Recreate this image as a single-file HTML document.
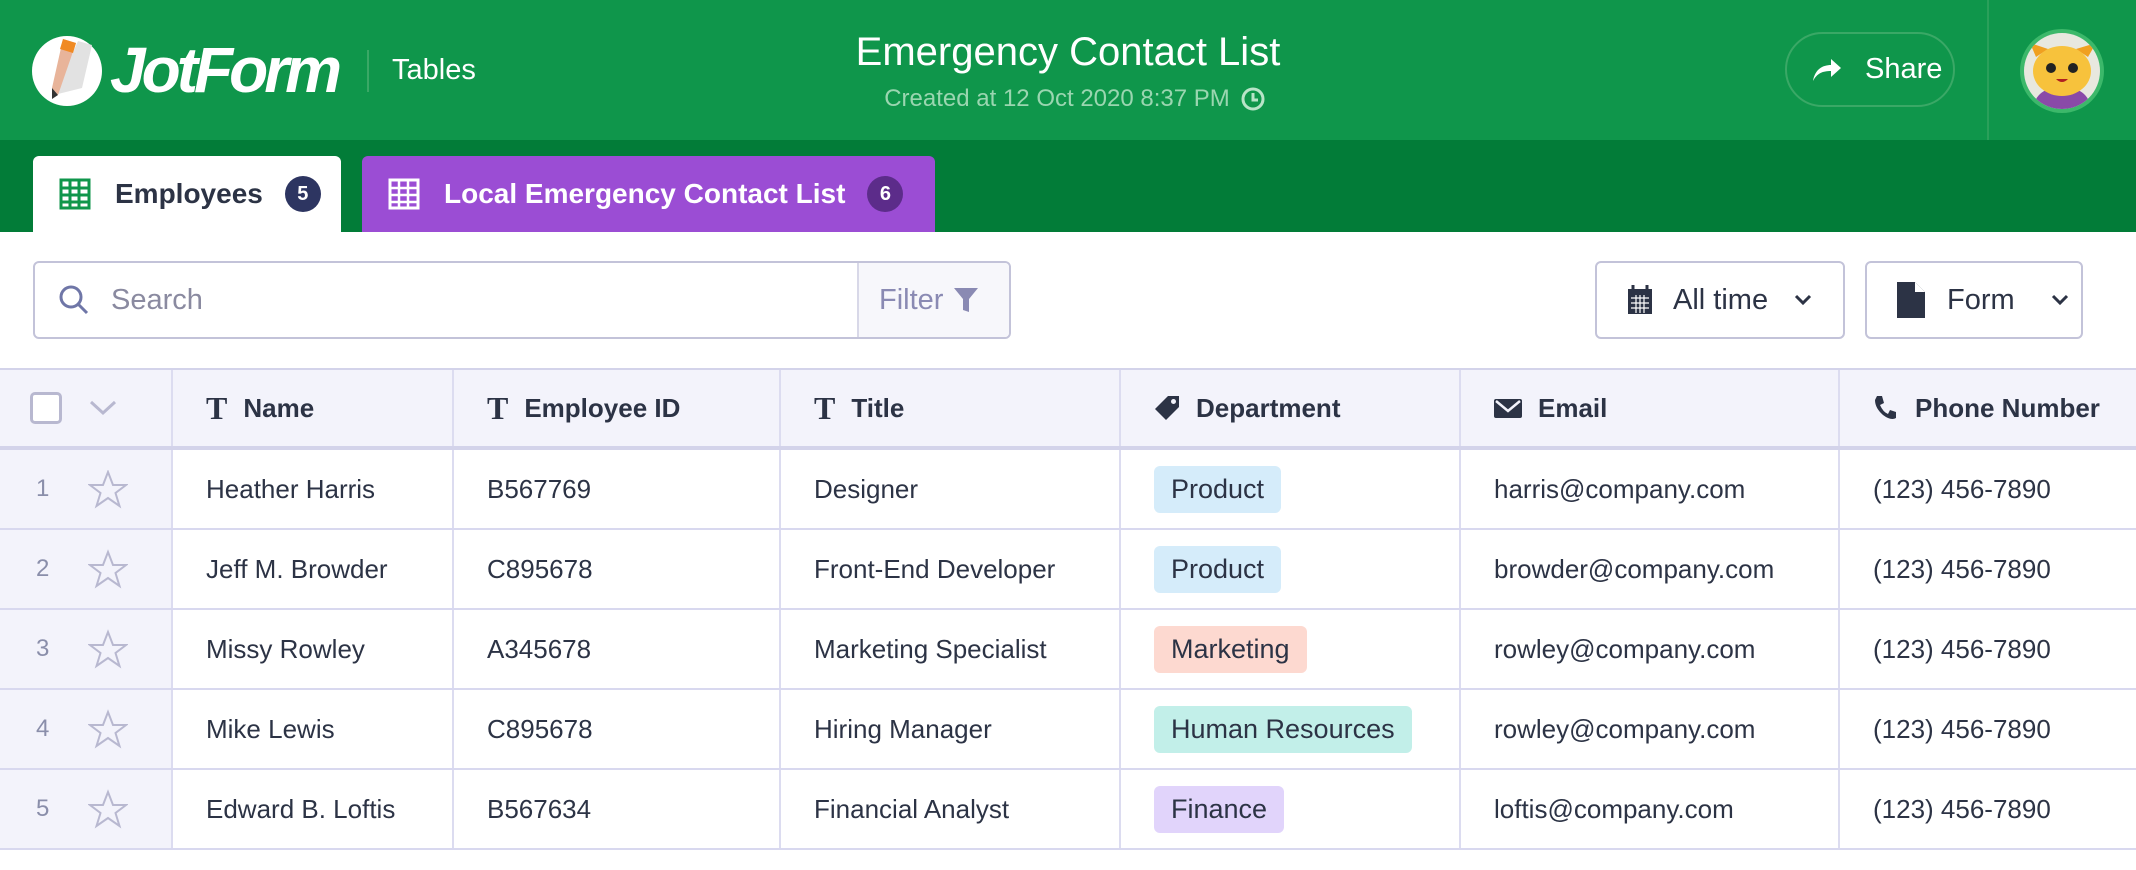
<!DOCTYPE html>
<html><head><meta charset="utf-8"><style>
*{box-sizing:border-box;margin:0;padding:0}
body{width:2136px;height:852px;overflow:hidden;background:#fff;font-family:"Liberation Sans",sans-serif;color:#2c3345;position:relative}
.abs{position:absolute}
.hdr{left:0;top:0;width:2136px;height:140px;background:#0f964b}
.tabbar{left:0;top:140px;width:2136px;height:92px;background:#027c38}
.tab{top:156px;height:76px;border-radius:6px 6px 0 0;display:flex;align-items:center;font-size:28px;font-weight:bold}
.badge{width:36px;height:36px;border-radius:18px;display:flex;align-items:center;justify-content:center;font-size:20px;color:#fff;margin-left:22px}
.btn{border:2px solid #c3c3d9;border-radius:6px;background:#fff;display:flex;align-items:center;font-size:29px}
.tbl{left:0;top:368px;width:2136px}
.row{position:absolute;left:0;width:2136px;height:80px;border-bottom:2px solid #d8d8ef}
.cell{position:absolute;top:0;height:100%;display:flex;align-items:center;font-size:26px;border-right:2px solid #dcdcf0;padding-left:33px;color:#2c3345}
.hd .cell{font-weight:bold}
.tag{padding:8px 17px;border-radius:6px;font-size:27px}
.num{color:#8a8eaa;font-size:24px}
</style></head><body>
<div class="abs hdr"></div>
<svg class="abs" style="left:30px;top:33px" width="76" height="76" viewBox="0 0 76 76">
<circle cx="37" cy="38" r="35" fill="#fff"/>
<path d="M48 8 L62 12 L52 55 L24 62 Z" fill="#e2e2e2"/>
<path d="M33 6 L46 10 L28 62 L22 55 Z" fill="#e8b49a"/>
<path d="M33 6 L46 10 L43 20 L30 16 Z" fill="#f08a24"/>
<path d="M22 55 L28 62 L22 66 Z" fill="#333"/>
</svg>
<div class="abs" style="left:110px;top:33px;font-size:64px;font-weight:bold;font-style:italic;color:#fff;letter-spacing:-4px">JotForm</div>
<div class="abs" style="left:367px;top:50px;width:2px;height:42px;background:#3aa866"></div>
<div class="abs" style="left:392px;top:54px;font-size:29px;color:#fff">Tables</div>
<div class="abs" style="left:0;width:2136px;top:30px;text-align:center;font-size:40px;color:#fff">Emergency Contact List</div>
<div class="abs" style="left:0;width:2136px;top:85px;display:flex;justify-content:center;align-items:center;font-size:24px;color:#9ad6b0;padding-left:14px">Created at 12 Oct 2020 8:37 PM
<svg width="26" height="26" viewBox="0 0 26 26" style="margin-left:10px"><circle cx="13" cy="13" r="10" fill="none" stroke="#b8e4c8" stroke-width="3"/><path d="M13 7v7h5" fill="none" stroke="#b8e4c8" stroke-width="3"/></svg></div>
<div class="abs" style="left:1785px;top:32px;width:170px;height:75px;border:2px solid #3aa866;border-radius:38px;display:flex;align-items:center;padding-left:22px;color:#fff;font-size:29px">
<svg width="34" height="26" viewBox="0 0 34 26" style="margin-right:22px"><path d="M4 24 C6 12 14 8 22 8 V2 L32 11 L22 20 V14 C14 14 8 16 4 24Z" fill="#fff"/></svg>Share</div>
<div class="abs" style="left:1987px;top:0;width:2px;height:140px;background:#2aa05a"></div>
<svg class="abs" style="left:2018px;top:27px" width="88" height="88" viewBox="0 0 88 88">
<circle cx="44" cy="44" r="42" fill="#3cb86a"/><circle cx="44" cy="44" r="38" fill="#e8e8df"/>
<clipPath id="c"><circle cx="44" cy="44" r="38"/></clipPath>
<g clip-path="url(#c)"><path d="M14 90 Q14 60 44 60 Q74 60 74 90Z" fill="#8a4aa8"/>
<path d="M18 30 L12 16 L30 22Z M70 30 L78 16 L58 22Z" fill="#f0a020"/>
<ellipse cx="44" cy="44" rx="29" ry="25" fill="#f7c23c"/>
<circle cx="33" cy="41" r="5" fill="#222"/><circle cx="55" cy="41" r="5" fill="#222"/>
<path d="M38 52 Q44 58 50 52Z" fill="#b02020"/></g></svg>

<div class="abs tabbar"></div>
<div class="abs tab" style="left:33px;width:308px;background:#fff;padding-left:26px;color:#2c3345">
<svg width="32" height="32" viewBox="0 0 32 32" style="margin-right:24px"><rect x="2" y="2" width="28" height="28" fill="none" stroke="#0f964b" stroke-width="3"/><path d="M2 10H30M2 17H30M2 24H30M11 2V30M20 2V30" stroke="#0f964b" stroke-width="3"/></svg>Employees<div class="badge" style="background:#2d3561">5</div></div>
<div class="abs tab" style="left:362px;width:573px;background:#9b4dd4;padding-left:26px;color:#fff">
<svg width="32" height="32" viewBox="0 0 32 32" style="margin-right:24px"><rect x="2" y="2" width="28" height="28" fill="none" stroke="#fff" stroke-width="3"/><path d="M2 10H30M2 17H30M2 24H30M11 2V30M20 2V30" stroke="#fff" stroke-width="2.5"/></svg>Local Emergency Contact List<div class="badge" style="background:#5c2c8a">6</div></div>

<div class="abs btn" style="left:33px;top:261px;width:978px;height:78px;overflow:hidden">
<svg width="34" height="34" viewBox="0 0 34 34" style="margin-left:22px;margin-right:20px"><circle cx="14" cy="14" r="10" fill="none" stroke="#6f76a7" stroke-width="3"/><path d="M21 21L30 30" stroke="#6f76a7" stroke-width="3"/></svg>
<span style="color:#8a8aa0">Search</span>
<div style="position:absolute;left:822px;top:0;width:156px;height:100%;border-left:2px solid #d8d8e8;background:#f7f7fb;display:flex;align-items:center;padding-left:20px;color:#8a8ab3">Filter<svg width="26" height="28" viewBox="0 0 26 28" style="margin-left:10px"><path d="M1 2H25L16 13V26L10 24V13Z" fill="#8a8ab3"/></svg></div></div>

<div class="abs btn" style="left:1595px;top:261px;width:250px;height:78px;padding-left:30px">
<svg width="26" height="30" viewBox="0 0 26 30" style="margin-right:20px"><rect x="1" y="4" width="24" height="25" fill="#2c3345"/><path d="M6 0v6M20 0v6" stroke="#2c3345" stroke-width="3"/><path d="M4 13H22M4 18H22M4 23H22M9 10V28M13 10V28M17 10V28" stroke="#fff" stroke-width="1.2"/></svg>All time
<svg width="18" height="12" viewBox="0 0 18 12" style="margin-left:26px"><path d="M2 2L9 9L16 2" fill="none" stroke="#2c3345" stroke-width="3"/></svg></div>
<div class="abs btn" style="left:1865px;top:261px;width:218px;height:78px;padding-left:30px">
<svg width="28" height="36" viewBox="0 0 28 36" style="margin-right:22px"><path d="M0 0H18L28 10V36H0Z" fill="#2c3345"/><path d="M18 0V10H28" fill="#fff"/></svg>Form
<svg width="18" height="12" viewBox="0 0 18 12" style="margin-left:36px"><path d="M2 2L9 9L16 2" fill="none" stroke="#2c3345" stroke-width="3"/></svg></div>

<div class="abs tbl">
<div class="row hd" style="top:0;height:82px;background:#f3f3fb;border-top:2px solid #d3d3ea;border-bottom:4px solid #d3d3ea">
<div class="cell" style="left:0;width:173px;padding-left:30px"><div style="width:32px;height:32px;border:3px solid #b8b8d0;border-radius:5px;background:#fff"></div><svg width="30" height="18" viewBox="0 0 30 18" style="margin-left:26px"><path d="M3 3L15 14L27 3" fill="none" stroke="#b8b8d0" stroke-width="3"/></svg></div>
<div class="cell" style="left:173px;width:281px"><b style="font-family:'Liberation Serif',serif;font-size:32px;margin-right:16px">T</b>Name</div>
<div class="cell" style="left:454px;width:327px"><b style="font-family:'Liberation Serif',serif;font-size:32px;margin-right:16px">T</b>Employee ID</div>
<div class="cell" style="left:781px;width:340px"><b style="font-family:'Liberation Serif',serif;font-size:32px;margin-right:16px">T</b>Title</div>
<div class="cell" style="left:1121px;width:340px"><svg width="26" height="26" viewBox="0 0 26 26" style="margin-right:16px"><path d="M14 1H25V12L12 25L1 14Z" fill="#2c3345"/><circle cx="19.5" cy="6.5" r="2.5" fill="#f3f3fb"/></svg>Department</div>
<div class="cell" style="left:1461px;width:379px"><svg width="28" height="22" viewBox="0 0 28 22" style="margin-right:16px"><rect x="0" y="2" width="28" height="19" rx="2" fill="#2c3345"/><path d="M2 4L14 14L26 4" fill="none" stroke="#f3f3fb" stroke-width="2.5"/></svg>Email</div>
<div class="cell" style="left:1840px;width:296px;border-right:none"><svg width="24" height="26" viewBox="0 0 24 26" style="margin-right:18px"><path d="M4 1L9 1L11 8L7 10Q10 17 15 19L17 15L23 17L23 23Q18 26 10 20Q2 13 2 5Z" fill="#2c3345"/></svg>Phone Number</div>
</div>
</div>

<div class="abs" style="left:0;top:450px;width:2136px">
<div class="row" style="top:0"><div class="cell" style="left:0;width:173px;background:#f3f3fb;padding-left:36px"><span class="num">1</span></div><div class="cell" style="left:173px;width:281px">Heather Harris</div><div class="cell" style="left:454px;width:327px">B567769</div><div class="cell" style="left:781px;width:340px">Designer</div><div class="cell" style="left:1121px;width:340px"><span class="tag" style="background:#d5ecfa">Product</span></div><div class="cell" style="left:1461px;width:379px">harris@company.com</div><div class="cell" style="left:1840px;width:296px;border-right:none">(123) 456-7890</div></div>
<div class="row" style="top:80px"><div class="cell" style="left:0;width:173px;background:#f3f3fb;padding-left:36px"><span class="num">2</span></div><div class="cell" style="left:173px;width:281px">Jeff M. Browder</div><div class="cell" style="left:454px;width:327px">C895678</div><div class="cell" style="left:781px;width:340px">Front-End Developer</div><div class="cell" style="left:1121px;width:340px"><span class="tag" style="background:#d5ecfa">Product</span></div><div class="cell" style="left:1461px;width:379px">browder@company.com</div><div class="cell" style="left:1840px;width:296px;border-right:none">(123) 456-7890</div></div>
<div class="row" style="top:160px"><div class="cell" style="left:0;width:173px;background:#f3f3fb;padding-left:36px"><span class="num">3</span></div><div class="cell" style="left:173px;width:281px">Missy Rowley</div><div class="cell" style="left:454px;width:327px">A345678</div><div class="cell" style="left:781px;width:340px">Marketing Specialist</div><div class="cell" style="left:1121px;width:340px"><span class="tag" style="background:#fdd9d0">Marketing</span></div><div class="cell" style="left:1461px;width:379px">rowley@company.com</div><div class="cell" style="left:1840px;width:296px;border-right:none">(123) 456-7890</div></div>
<div class="row" style="top:240px"><div class="cell" style="left:0;width:173px;background:#f3f3fb;padding-left:36px"><span class="num">4</span></div><div class="cell" style="left:173px;width:281px">Mike Lewis</div><div class="cell" style="left:454px;width:327px">C895678</div><div class="cell" style="left:781px;width:340px">Hiring Manager</div><div class="cell" style="left:1121px;width:340px"><span class="tag" style="background:#c2efe9">Human Resources</span></div><div class="cell" style="left:1461px;width:379px">rowley@company.com</div><div class="cell" style="left:1840px;width:296px;border-right:none">(123) 456-7890</div></div>
<div class="row" style="top:320px"><div class="cell" style="left:0;width:173px;background:#f3f3fb;padding-left:36px"><span class="num">5</span></div><div class="cell" style="left:173px;width:281px">Edward B. Loftis</div><div class="cell" style="left:454px;width:327px">B567634</div><div class="cell" style="left:781px;width:340px">Financial Analyst</div><div class="cell" style="left:1121px;width:340px"><span class="tag" style="background:#e1d4fb">Finance</span></div><div class="cell" style="left:1461px;width:379px">loftis@company.com</div><div class="cell" style="left:1840px;width:296px;border-right:none">(123) 456-7890</div></div>
</div>
<svg class="abs" style="left:88px;top:470px" width="40" height="400" viewBox="0 0 40 400">
<defs><path id="s" d="M20 2L25 15L38 15L27.5 23L31.5 36L20 28L8.5 36L12.5 23L2 15L15 15Z" fill="none" stroke="#b8b8d0" stroke-width="2"/></defs>
<use href="#s" y="0"/><use href="#s" y="80"/><use href="#s" y="160"/><use href="#s" y="240"/><use href="#s" y="320"/>
</svg>
</body></html>
